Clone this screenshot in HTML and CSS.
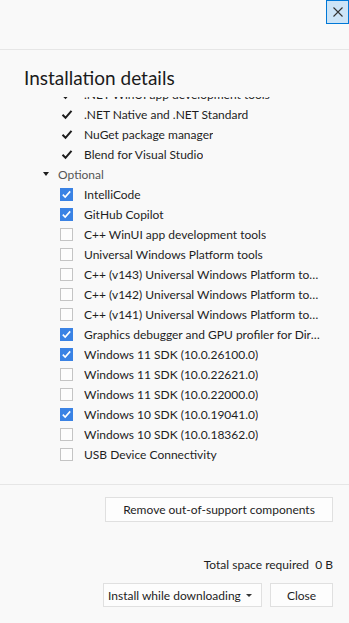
FILE: index.html
```html
<!DOCTYPE html>
<html>
<head>
  <meta charset="UTF-8">
  <meta name="viewport" content="width=device-width, initial-scale=1.0">
  <title>Installation details</title>
  <link rel="stylesheet" href="styles.css">
</head>
<body>
  <div class="wrap">
    <div class="header">
      <button class="close-x" title="Close">
        <svg width="10" height="10" viewBox="0 0 10 10"><path d="M0.5 0.5L9.5 9.5M9.5 0.5L0.5 9.5" stroke="#333" stroke-width="1.1" fill="none"/></svg>
      </button>
    </div>
    <div class="details">
      <h2>Installation details</h2>
      <div class="scroll">
        <ul class="list">
          <li class="item"><span class="tick"></span><span class="label">.NET WinUI app development tools</span></li>
          <li class="item"><span class="tick"></span><span class="label">.NET Native and .NET Standard</span></li>
          <li class="item"><span class="tick"></span><span class="label">NuGet package manager</span></li>
          <li class="item"><span class="tick"></span><span class="label">Blend for Visual Studio</span></li>
          <li class="group"><span class="caret"></span><span class="label">Optional</span></li>
          <li class="item"><span class="box on"></span><span class="label">IntelliCode</span></li>
          <li class="item"><span class="box on"></span><span class="label">GitHub Copilot</span></li>
          <li class="item"><span class="box"></span><span class="label">C++ WinUI app development tools</span></li>
          <li class="item"><span class="box"></span><span class="label">Universal Windows Platform tools</span></li>
          <li class="item"><span class="box"></span><span class="label">C++ (v143) Universal Windows Platform tools</span></li>
          <li class="item"><span class="box"></span><span class="label">C++ (v142) Universal Windows Platform tools</span></li>
          <li class="item"><span class="box"></span><span class="label">C++ (v141) Universal Windows Platform tools</span></li>
          <li class="item"><span class="box on"></span><span class="label">Graphics debugger and GPU profiler for DirectX</span></li>
          <li class="item"><span class="box on"></span><span class="label">Windows 11 SDK (10.0.26100.0)</span></li>
          <li class="item"><span class="box"></span><span class="label">Windows 11 SDK (10.0.22621.0)</span></li>
          <li class="item"><span class="box"></span><span class="label">Windows 11 SDK (10.0.22000.0)</span></li>
          <li class="item"><span class="box on"></span><span class="label">Windows 10 SDK (10.0.19041.0)</span></li>
          <li class="item"><span class="box"></span><span class="label">Windows 10 SDK (10.0.18362.0)</span></li>
          <li class="item"><span class="box"></span><span class="label">USB Device Connectivity</span></li>
        </ul>
      </div>
    </div>
    <div class="footer">
      <div class="row">
        <button class="btn remove">Remove out-of-support components</button>
      </div>
      <div class="space">Total space required&nbsp; 0 B</div>
      <div class="row actions">
        <button class="btn select"><span>Install while downloading</span><span class="drop"></span></button>
        <button class="btn close">Close</button>
      </div>
    </div>
  </div>
</body>
</html>
```

FILE: styles.css
```css
* {padding: 0; margin: 0;}

html, body, .wrap {
  width: 100%;
  height: 100%;
  background-color: #f9f9f9;
}
body {
  font-family: "Segoe UI", Lato, "Noto Sans", sans-serif;
  font-size: 12px;
  color: #1e1e1e;
  overflow: hidden;
}
button {
  font-family: inherit;
  font-size: 12px;
  color: #1e1e1e;
}

.header {
  height: 49px;
  border-bottom: 1px solid #e6e6e6;
  display: flex;
  justify-content: flex-end;
  align-items: flex-start;
}
.close-x {
  width: 23px;
  height: 24px;
  border: 1px solid #0078d7;
  background: #cce4f7;
  display: flex;
  align-items: center;
  justify-content: center;
}

.details h2 {
  margin-top: 16px;
  padding-left: 24px;
  font-size: 19px;
  line-height: 24px;
  font-weight: normal;
  color: #1b1b1b;
}
.scroll {
  margin-top: 7px;
  height: 387px;
  overflow: hidden;
}
.list {
  list-style: none;
  margin-top: -13px;
  padding: 0 28px 0 60px;
}
.list li {
  height: 20px;
  display: flex;
  align-items: center;
}
.list .label {
  white-space: nowrap;
  overflow: hidden;
  text-overflow: ellipsis;
  min-width: 0;
}
.tick, .box {
  flex: none;
  width: 14px;
  height: 13px;
  margin-right: 10px;
  box-sizing: border-box;
}
.tick {
  background: url("data:image/svg+xml,%3Csvg xmlns='http://www.w3.org/2000/svg' width='14' height='13' viewBox='0 0 14 13'%3E%3Cpath d='M2.5 6.8l3 3 6-7' stroke='%231e1e1e' stroke-width='2' fill='none'/%3E%3C/svg%3E") center no-repeat;
}
.box {
  width: 13px;
  margin-right: 11px;
  border: 1px solid #c4c4c4;
  background: #fdfdfd;
}
.box.on {
  border-color: #3a82e4;
  background: #3a82e4 url("data:image/svg+xml,%3Csvg xmlns='http://www.w3.org/2000/svg' width='11' height='11' viewBox='0 0 11 11'%3E%3Cpath d='M1.8 5.6l2.4 2.4 5-5.6' stroke='%23fff' stroke-width='1.6' fill='none'/%3E%3C/svg%3E") center no-repeat;
}
.list .group {
  margin-left: -17px;
  color: #555;
}
.caret {
  width: 0;
  height: 0;
  margin-right: 9px;
  border-left: 3.5px solid transparent;
  border-right: 3.5px solid transparent;
  border-top: 4px solid #1e1e1e;
}

.footer {
  border-top: 1px solid #e6e6e6;
  padding: 12px 16px 0;
}
.footer .row {
  display: flex;
  justify-content: flex-end;
}
.btn {
  height: 25px;
  border: 1px solid #e0e0e0;
  background: #fdfdfd;
}
.remove {
  width: 228px;
}
.space {
  margin-top: 35px;
  line-height: 16px;
  text-align: right;
}
.actions {
  margin-top: 10px;
}
.actions .btn {
  height: 24px;
}
.select {
  width: 159px;
  padding: 0 4px;
  display: flex;
  align-items: center;
  justify-content: space-between;
  text-align: left;
}
.drop {
  width: 0;
  height: 0;
  margin-right: 5px;
  border-left: 3px solid transparent;
  border-right: 3px solid transparent;
  border-top: 3px solid #333;
}
.close {
  width: 63px;
  margin-left: 8px;
}
```
